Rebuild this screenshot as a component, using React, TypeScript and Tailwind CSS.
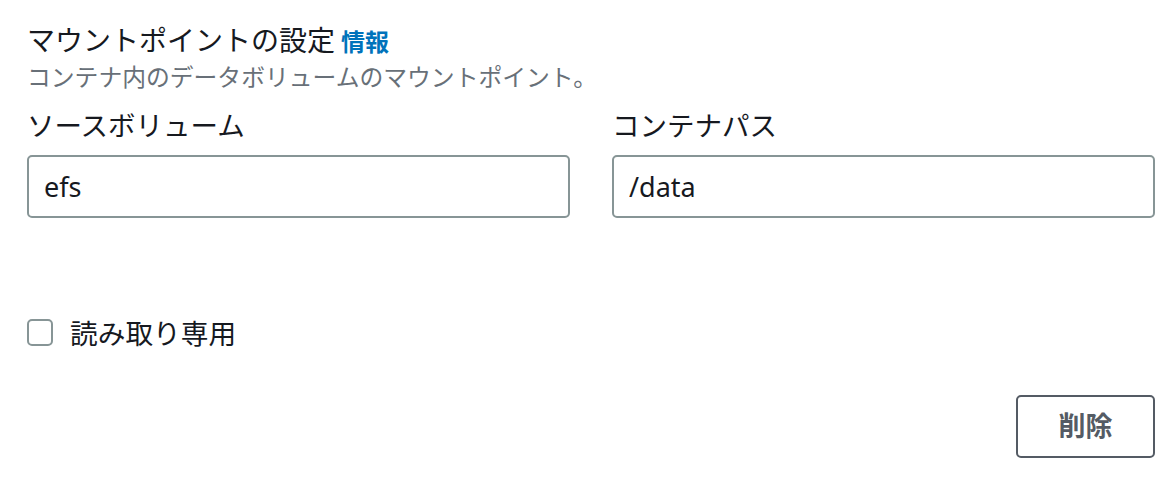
const font = { fontFamily: '"Noto Sans", "Noto Sans CJK JP", sans-serif' }

const Field = ({ label, value }: { label: string; value: string }) => (
  <div className="flex flex-col">
    <label className="text-[27.5px] leading-[36px] text-[#16191f]">{label}</label>
    <input
      readOnly
      value={value}
      className="mt-[11px] h-[63px] w-full rounded-[5px] border-2 border-[#879596] bg-white px-[15px] text-[27px] text-[#16191f] outline-none"
      style={font}
    />
  </div>
)

export default function App() {
  return (
    <div className="min-h-[480px] bg-white pb-[22px] pl-[27px] pr-[17px] pt-[22px]" style={font}>
      <div className="flex items-baseline gap-[6px] leading-[36px]">
        <span className="text-[28px] text-[#16191f]">マウントポイントの設定</span>
        <a className="text-[24px] font-bold text-[#0073bb]">情報</a>
      </div>
      <p className="mt-[1px] text-[23.8px] leading-[32px] text-[#687078]">
        コンテナ内のデータボリュームのマウントポイント。
      </p>
      <div className="mt-[15px] grid grid-cols-2 gap-[42px]">
        <Field label="ソースボリューム" value="efs" />
        <Field label="コンテナパス" value="/data" />
      </div>
      <label className="mt-[101px] flex h-[27px] items-center gap-[17px]">
        <span className="h-[27px] w-[26px] rounded-[5px] border-2 border-[#879596] bg-white" />
        <span className="text-[27.7px] leading-[36px] text-[#16191f]">読み取り専用</span>
      </label>
      <div className="mt-[49px] flex justify-end">
        <button className="flex h-[63px] w-[139px] items-center justify-center rounded-[5px] border-2 border-[#545b64] bg-white text-[27px] font-bold text-[#545b64]">
          削除
        </button>
      </div>
    </div>
  )
}
